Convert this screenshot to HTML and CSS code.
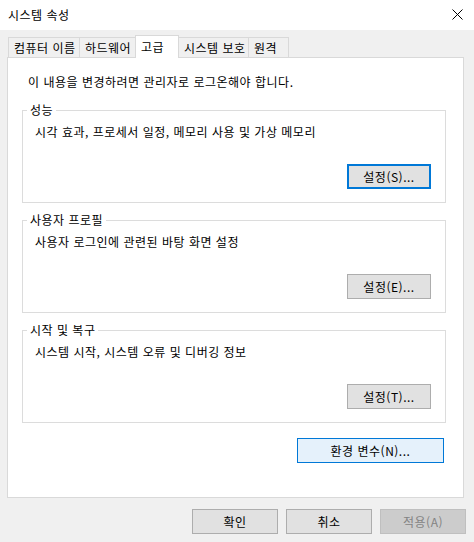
FILE: index.html
```html
<!DOCTYPE html>
<html lang="ko">
<head>
    <meta charset="UTF-8">
    <meta name="viewport" content="width=device-width, initial-scale=1.0">
    <title>시스템 속성</title>
    <link rel="stylesheet" href="styles.css">
</head>
<body>
    <div class="window">
        <header class="titlebar">
            <span class="title">시스템 속성</span>
            <svg class="close" width="11" height="11" viewBox="0 0 11 11">
                <path d="M0.5 0.5 L10.5 10.5 M10.5 0.5 L0.5 10.5" stroke="#000" stroke-width="1" fill="none"/>
            </svg>
        </header>

        <nav class="tabs">
            <div class="tab tab-name">컴퓨터 이름</div>
            <div class="tab tab-hw">하드웨어</div>
            <div class="tab tab-adv active">고급</div>
            <div class="tab tab-prot">시스템 보호</div>
            <div class="tab tab-remote">원격</div>
        </nav>

        <main class="panel">
            <p class="notice">이 내용을 변경하려면 관리자로 로그온해야 합니다.</p>

            <section class="group">
                <div class="group-title">성능</div>
                <p class="group-text">시각 효과, 프로세서 일정, 메모리 사용 및 가상 메모리</p>
                <div class="group-actions">
                    <button class="btn btn-focus">설정(S)...</button>
                </div>
            </section>

            <section class="group">
                <div class="group-title">사용자 프로필</div>
                <p class="group-text">사용자 로그인에 관련된 바탕 화면 설정</p>
                <div class="group-actions">
                    <button class="btn">설정(E)...</button>
                </div>
            </section>

            <section class="group">
                <div class="group-title">시작 및 복구</div>
                <p class="group-text">시스템 시작, 시스템 오류 및 디버깅 정보</p>
                <div class="group-actions">
                    <button class="btn">설정(T)...</button>
                </div>
            </section>

            <div class="panel-actions">
                <button class="btn btn-env">환경 변수(N)...</button>
            </div>
        </main>

        <footer class="dialog-actions">
            <button class="btn btn-dialog">확인</button>
            <button class="btn btn-dialog">취소</button>
            <button class="btn btn-dialog" disabled>적용(A)</button>
        </footer>
    </div>
</body>
</html>
```

FILE: styles.css
```css
/* Reset */
* {
    margin: 0;
    padding: 0;
    box-sizing: border-box;
}

body {
    font-family: "Noto Sans CJK KR", "Noto Sans", sans-serif;
    font-size: 12px;
    letter-spacing: 0.5px;
    color: #000;
    background-color: #f0f0f0;
    width: 474px;
    height: 542px;
    overflow: hidden;
}

.window {
    width: 474px;
    height: 542px;
}

/* Title bar */
.titlebar {
    height: 30px;
    background-color: #fff;
    display: flex;
    align-items: center;
    justify-content: space-between;
    padding: 0 11px 0 8px;
}

.title {
    line-height: 16px;
}

.close {
    display: block;
    margin-top: -1px;
}

/* Tabs */
.tabs {
    display: flex;
    align-items: flex-start;
    height: 23px;
    margin-top: 5px;
    padding-left: 8px;
}

.tab {
    height: 20px;
    margin-top: 2px;
    margin-left: -1px;
    padding-left: 5px;
    line-height: 19px;
    border: 1px solid #d9d9d9;
    border-bottom: none;
    background-color: #f0f0f0;
    white-space: nowrap;
}

.tab:first-child {
    margin-left: 0;
}

.tab-name { width: 72px; }
.tab-hw { width: 57px; }
.tab-adv { width: 44px; }
.tab-prot { width: 71px; }
.tab-remote { width: 41px; }

.tab.active {
    height: 23px;
    margin-top: 0;
    padding-top: 1px;
    background-color: #fff;
    position: relative;
    z-index: 1;
}

/* Panel */
.panel {
    width: 457px;
    height: 441px;
    margin: -1px 0 0 7px;
    padding: 16px 17px 0 14px;
    background-color: #fff;
    border: 1px solid #d9d9d9;
}

.notice {
    line-height: 16px;
    padding-left: 6px;
}

.group {
    margin-top: 20px;
    padding: 0 14px 13px 12px;
    border: 1px solid #dcdcdc;
}

.group + .group {
    margin-top: 17px;
}

.group-title {
    width: fit-content;
    margin: -9px 0 0 -8px;
    padding: 0 3px;
    line-height: 16px;
    background-color: #fff;
}

.group-text {
    margin-top: 6px;
    line-height: 16px;
}

.group-actions {
    display: flex;
    justify-content: flex-end;
    margin-top: 24px;
}

.panel-actions {
    display: flex;
    justify-content: flex-end;
    margin-top: 15px;
    padding-right: 2px;
}

/* Buttons */
.btn {
    width: 84px;
    height: 25px;
    font-family: inherit;
    font-size: 12px;
    letter-spacing: inherit;
    line-height: 23px;
    color: #000;
    background-color: #e1e1e1;
    border: 1px solid #adadad;
    white-space: nowrap;
}

.btn-focus {
    border: 2px solid #0078d7;
    line-height: 21px;
}

.btn-env {
    width: 147px;
    background-color: #e5f1fb;
    border-color: #0078d7;
}

.btn:disabled {
    color: #838383;
    background-color: #cccccc;
    border-color: #bfbfbf;
}

/* Dialog footer */
.dialog-actions {
    display: flex;
    justify-content: flex-end;
    gap: 8px;
    margin-top: 11px;
    padding-right: 8px;
}

.btn-dialog {
    width: 86px;
}
```
